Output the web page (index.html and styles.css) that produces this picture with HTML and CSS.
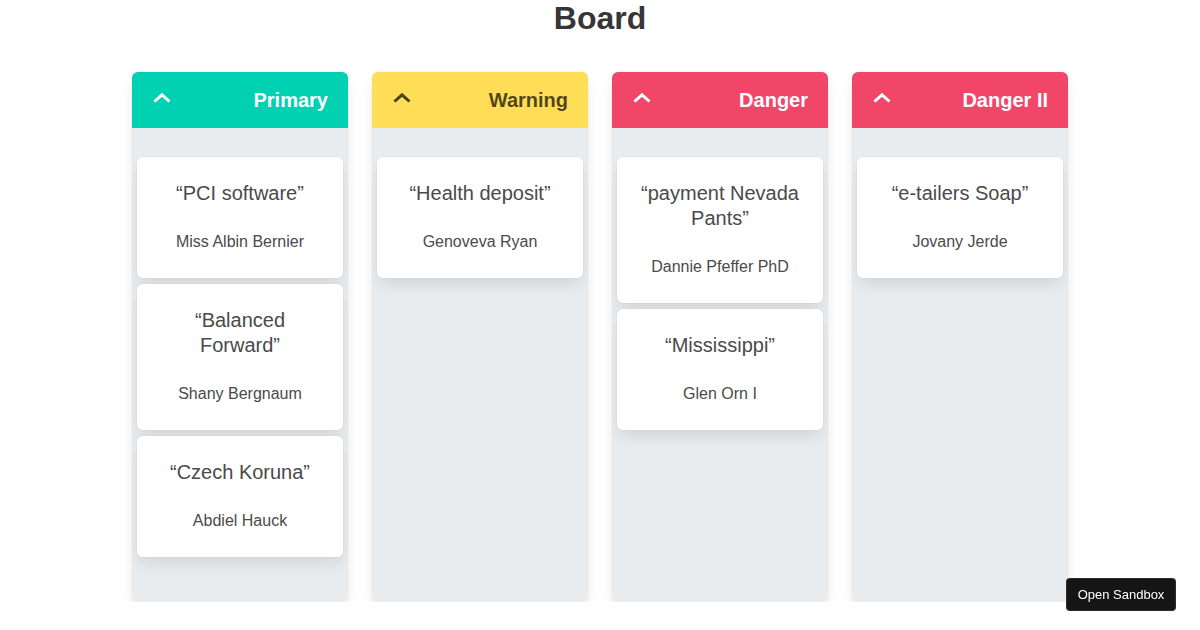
FILE: index.html
```html
<!DOCTYPE html>
<html>
<head>
<meta charset="utf-8">
<link rel="stylesheet" href="styles.css">
</head>
<body>
<h1 class="title">Board</h1>
<div class="board">
  <div class="column">
    <div class="column-header is-primary">
      <svg class="chev" width="18" height="10" viewBox="0 0 18 10"><polyline points="1.5,8.5 9,1.8 16.5,8.5" fill="none" stroke="currentColor" stroke-width="3"/></svg>
      <span class="column-name">Primary</span>
    </div>
    <div class="column-body">
      <div class="card"><div class="card-title">“PCI software”</div><div class="card-author">Miss Albin Bernier</div></div>
      <div class="card"><div class="card-title">“Balanced Forward”</div><div class="card-author">Shany Bergnaum</div></div>
      <div class="card"><div class="card-title">“Czech Koruna”</div><div class="card-author">Abdiel Hauck</div></div>
    </div>
  </div>
  <div class="column">
    <div class="column-header is-warning">
      <svg class="chev" width="18" height="10" viewBox="0 0 18 10"><polyline points="1.5,8.5 9,1.8 16.5,8.5" fill="none" stroke="currentColor" stroke-width="3"/></svg>
      <span class="column-name">Warning</span>
    </div>
    <div class="column-body">
      <div class="card"><div class="card-title">“Health deposit”</div><div class="card-author">Genoveva Ryan</div></div>
    </div>
  </div>
  <div class="column">
    <div class="column-header is-danger">
      <svg class="chev" width="18" height="10" viewBox="0 0 18 10"><polyline points="1.5,8.5 9,1.8 16.5,8.5" fill="none" stroke="currentColor" stroke-width="3"/></svg>
      <span class="column-name">Danger</span>
    </div>
    <div class="column-body">
      <div class="card"><div class="card-title">“payment Nevada Pants”</div><div class="card-author">Dannie Pfeffer PhD</div></div>
      <div class="card"><div class="card-title">“Mississippi”</div><div class="card-author">Glen Orn I</div></div>
    </div>
  </div>
  <div class="column">
    <div class="column-header is-danger">
      <svg class="chev" width="18" height="10" viewBox="0 0 18 10"><polyline points="1.5,8.5 9,1.8 16.5,8.5" fill="none" stroke="currentColor" stroke-width="3"/></svg>
      <span class="column-name">Danger II</span>
    </div>
    <div class="column-body">
      <div class="card"><div class="card-title">“e-tailers Soap”</div><div class="card-author">Jovany Jerde</div></div>
    </div>
  </div>
</div>
<button class="sandbox">Open Sandbox</button>
</body>
</html>
```

FILE: styles.css
```css
html, body {
  margin: 0;
  padding: 0;
  background: #fff;
  font-family: "Liberation Sans", Arial, sans-serif;
  color: #4a4a4a;
}
.title {
  margin: 0;
  height: 36px;
  line-height: 36px;
  font-size: 32px;
  font-weight: 700;
  color: #363636;
  text-align: center;
}
.board {
  display: flex;
  justify-content: center;
  gap: 24px;
  margin-top: 36px;
}
.column {
  width: 216px;
  height: 530px;
  display: flex;
  flex-direction: column;
  border-radius: 6px;
  background: #e9ecee;
  box-shadow: 0 8px 16px -2px rgba(10,10,10,0.1), 0 0 0 1px rgba(10,10,10,0.02);
  overflow: hidden;
}
.column-header {
  height: 56px;
  flex: none;
  display: flex;
  align-items: center;
  justify-content: space-between;
  padding: 0 20px 0 21px;
  color: #fff;
}
.column-header.is-primary { background: #00d1b2; }
.column-header.is-warning { background: #ffdd57; color: rgba(0,0,0,0.7); }
.column-header.is-danger { background: #f14668; }
.chev {
  display: block;
  margin-top: -5px;
}
.column-name {
  font-size: 20px;
  font-weight: 700;
  line-height: 24px;
}
.column-body {
  display: flex;
  flex-direction: column;
  gap: 6px;
  padding: 29px 5px 0;
}
.card {
  background: #fff;
  border-radius: 6px;
  box-shadow: 0 8px 16px -2px rgba(10,10,10,0.1), 0 0 0 1px rgba(10,10,10,0.02);
  padding: 24px 24px 26px;
  text-align: center;
}
.card-title {
  font-size: 20px;
  line-height: 25px;
  color: #4a4a4a;
}
.card-author {
  margin-top: 26px;
  font-size: 16px;
  line-height: 20px;
  color: #4a4a4a;
}
.sandbox {
  position: fixed;
  right: 24px;
  bottom: 19px;
  height: 33px;
  width: 110px;
  padding: 0;
  border: 1px solid rgba(255,255,255,0.1);
  border-radius: 4px;
  background: #151515;
  color: #fff;
  font-family: "Liberation Sans", Arial, sans-serif;
  font-size: 13px;
}
```
